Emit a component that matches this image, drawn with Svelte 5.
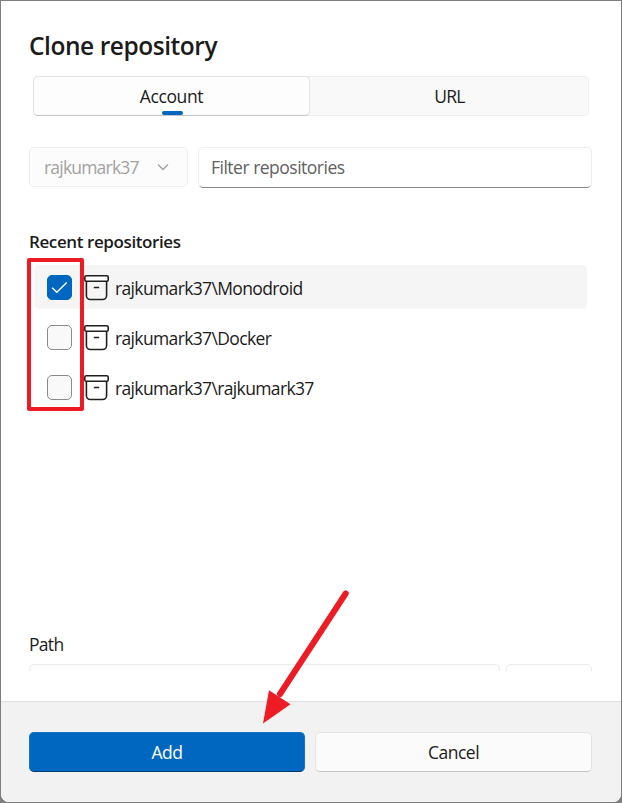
<script>
  let tab = $state('Account');
  let filter = $state('');
  let repos = $state([
    { owner: 'rajkumark37', name: 'Monodroid', checked: true },
    { owner: 'rajkumark37', name: 'Docker', checked: false },
    { owner: 'rajkumark37', name: 'rajkumark37', checked: false }
  ]);
</script>

<div class="window">
  <div class="dialog">
    <main>
      <h1>Clone repository</h1>
      <div class="tabs">
        {#each ['Account', 'URL'] as name}
          <button class="tab" class:active={tab === name} onclick={() => (tab = name)}>
            <span class={name.toLowerCase()}>{name}</span>
          </button>
        {/each}
      </div>
      <div class="filters">
        <button class="account-select" disabled>
          <span>rajkumark37</span>
          <svg width="12" height="8" viewBox="0 0 12 8"><path d="M1 1.500 6 6.500l5-5" /></svg>
        </button>
        <input class="search" placeholder="Filter repositories" bind:value={filter} />
      </div>
      <h2>Recent repositories</h2>
      <ul>
        {#each repos as repo}
          <li class:selected={repo.checked}>
            <button
              class="check"
              class:on={repo.checked}
              aria-label={repo.name}
              onclick={() => (repo.checked = !repo.checked)}
            >
              {#if repo.checked}
                <svg width="17" height="13" viewBox="0 0 17 13"><path d="M1.200 6.700 5.800 11.300 15.700 1.400" /></svg>
              {/if}
            </button>
            <svg class="repo" width="26" height="27" viewBox="0 0 26 27">
              <rect x="0.800" y="1.700" width="23.400" height="5.600" rx="1.500" />
              <path d="M2.400 7.300v14.200a4 4 0 0 0 4 4h12.200a4 4 0 0 0 4-4V7.300M9.800 13.500h5.400" />
            </svg>
            <span class="label">{repo.owner}\{repo.name}</span>
          </li>
        {/each}
      </ul>
      <div class="path-label">Path</div>
      <div class="path-row">
        <div class="path-field"></div>
        <div class="browse"></div>
      </div>
    </main>
    <footer>
      <button class="add">Add</button>
      <button class="cancel">Cancel</button>
    </footer>
  </div>
  <div class="highlight"></div>
  <svg class="arrow" width="90" height="140" viewBox="0 0 90 140">
    <path d="M85.700 8.500 20 109" />
    <polygon points="3,138.500 9,105.200 30.500,119.200" />
  </svg>
</div>

<style>
  :global(body) { margin: 0; background: #7f7f7f; }
  .window, .window * { box-sizing: border-box; }
  .window {
    position: relative;
    width: 622px;
    height: 803px;
    padding: 1px;
    overflow: hidden;
    background: #7f7f7f;
    color: #1b1b1b;
    font: 17.500px/24px "Open Sans", "Noto Sans", sans-serif;
  }
  button, input { font: inherit; color: inherit; margin: 0; padding: 0; }
  .dialog {
    display: flex;
    flex-direction: column;
    height: 801px;
    border-radius: 0 0 8px 8px;
    overflow: hidden;
    background: #fff;
  }
  main { height: 700px; padding: 0 29px 0 28px; flex: none; }
  h1 {
    margin: 27px 0 0;
    height: 36px;
    font-size: 24.500px;
    line-height: 36px;
    font-weight: 600;
    letter-spacing: -0.45px;
    white-space: nowrap;
  }
  .tabs {
    display: flex;
    height: 40px;
    margin: 12px 3px 0 4px;
    border-radius: 5px;
    background: #f9f9f9;
    box-shadow: inset 0 0 0 1px #efefef;
  }
  .tab {
    flex: 1;
    display: flex;
    justify-content: center;
    align-items: center;
    position: relative;
    border: 0;
    border-radius: 5px;
    background: none;
  }
  .tab.active {
    flex: 0 0 277px;
    border: 1px solid #e3e3e3;
    border-bottom-color: #c3c3c3;
    background: #fdfdfd;
  }
  .tab.active::after {
    content: "";
    position: absolute;
    left: 128px;
    bottom: 0;
    width: 21px;
    height: 4px;
    border-radius: 2px;
    background: #0067c0;
  }
  .account { letter-spacing: -0.4px; }
  .url { letter-spacing: -0.8px; }
  .filters { display: flex; gap: 10px; margin-top: 31px; height: 41px; }
  .account-select {
    display: flex;
    align-items: center;
    justify-content: space-between;
    width: 159px;
    height: 40px;
    padding: 0 18px 0 14px;
    border: 1px solid #eee;
    border-radius: 5px;
    background: #fcfcfc;
    color: #a2a2a2;
    letter-spacing: -0.8px;
  }
  .account-select path { fill: none; stroke: #a0a0a0; stroke-width: 1.3; }
  .search {
    flex: 1;
    min-width: 0;
    padding: 0 12px 1px;
    border: 1px solid #ededed;
    border-bottom-color: #868686;
    border-radius: 5px;
    outline: 0;
    background: #fff;
    letter-spacing: -0.5px;
  }
  .search::placeholder { color: #606060; opacity: 1; }
  h2 {
    margin: 42px 0 0;
    height: 24px;
    font-size: 17px;
    line-height: 24px;
    font-weight: 600;
    letter-spacing: -0.4px;
  }
  ul { margin: 11px 5px 0; padding: 0; list-style: none; display: flex; flex-direction: column; gap: 6px; }
  li { display: flex; align-items: center; height: 44px; padding-left: 13px; border-radius: 5px; }
  li.selected { background: #f5f5f5; }
  .check {
    display: flex;
    align-items: center;
    justify-content: center;
    width: 25px;
    height: 25px;
    border: 1px solid #8b8b8b;
    border-radius: 5px;
    background: #f9f9f9;
  }
  .check.on { border-color: #0067c0; background: #0067c0; }
  .check path { fill: none; stroke: #fff; stroke-width: 1.4; }
  .repo { margin-left: 12px; fill: none; stroke: #202020; stroke-width: 1.6; }
  .repo rect { fill: #fff; }
  .label { margin-left: 5px; padding-top: 2px; letter-spacing: -0.64px; white-space: nowrap; }
  .path-label { margin-top: 223px; height: 24px; letter-spacing: -0.7px; }
  .path-row { display: flex; gap: 6px; height: 7px; margin-top: 8px; }
  .path-field, .browse { border: 1px solid #ebebeb; border-bottom: 0; border-radius: 5px 5px 0 0; }
  .path-field { flex: 1; background: #fcfcfc; }
  .browse { width: 86px; background: #fff; }
  footer {
    flex: 1;
    display: flex;
    gap: 10px;
    padding: 30px 29px 0 28px;
    border-top: 1px solid #e2e2e2;
    background: #f2f2f2;
  }
  footer button { height: 40px; border-radius: 5px; letter-spacing: -0.5px; }
  .add { width: 276px; border: 1px solid #1473c5; border-bottom-color: #003e73; background: #0067c0; color: #fff; }
  .cancel { flex: 1; border: 1px solid #e3e3e3; border-bottom-color: #c5c5c5; background: #fbfbfb; }
  .highlight {
    position: absolute;
    left: 27px;
    top: 258px;
    width: 57px;
    height: 153px;
    border: 4px solid #ed1c24;
    border-radius: 2px;
  }
  .arrow { position: absolute; left: 260px; top: 585px; fill: #ed1c24; }
  .arrow path { stroke: #ed1c24; stroke-width: 6; stroke-linecap: round; }
</style>
